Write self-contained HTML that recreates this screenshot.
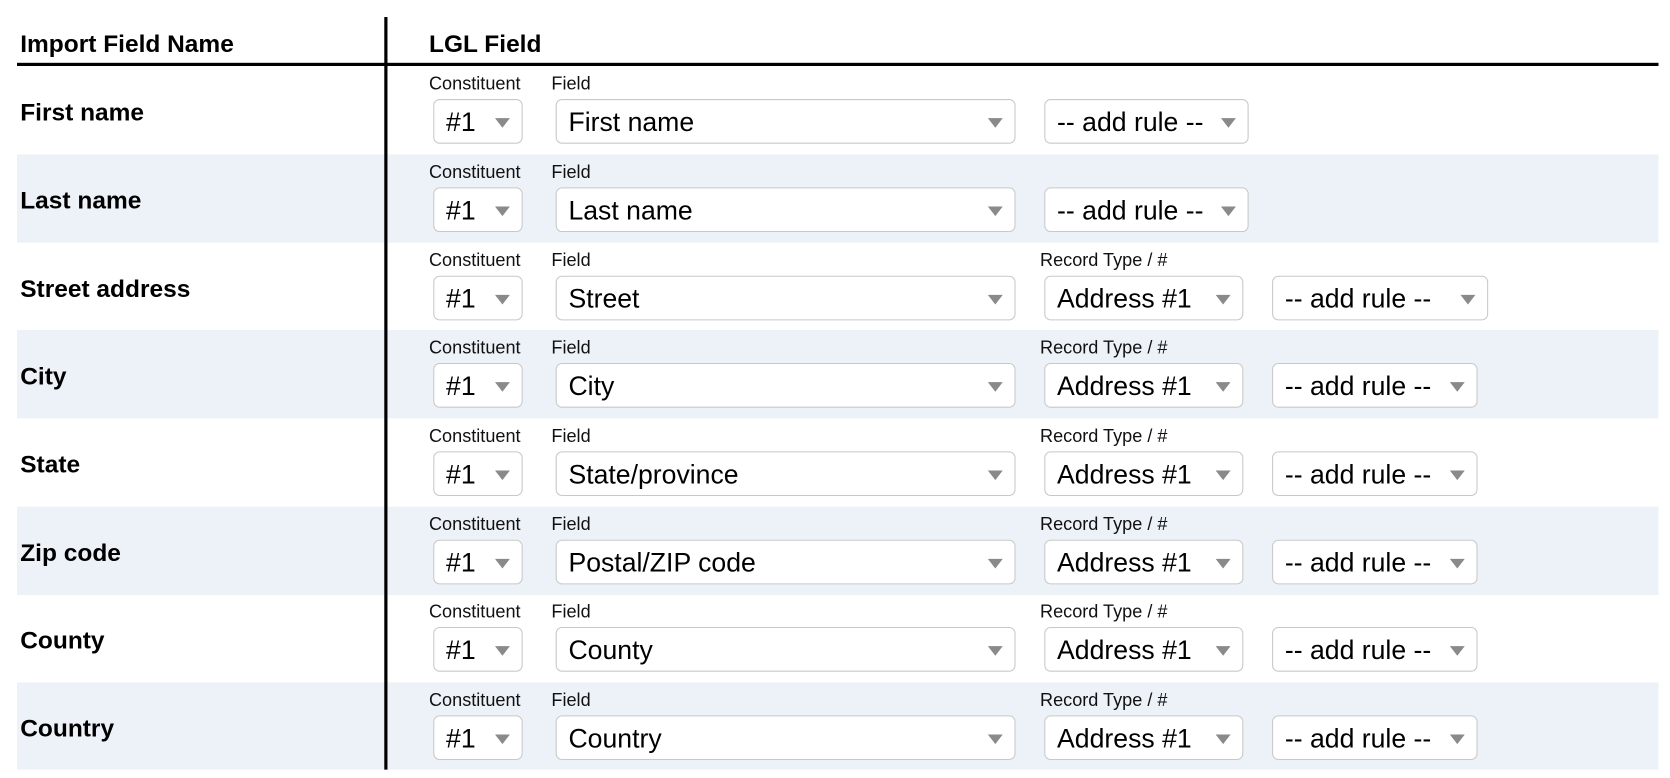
<!DOCTYPE html>
<html><head><style>
body{margin:0;width:1670px;height:778px;background:#fff;font-family:"Liberation Sans",Arial,sans-serif;position:relative;overflow:hidden}
#w{position:absolute;left:0;top:0;width:1570px;height:731px;transform:scale(1.0645);transform-origin:0 0}
.a{position:absolute}
.h{font-weight:bold;font-size:23px;top:28px}
.row{position:absolute;left:16px;width:1542px;height:83px}
.sh{background:#edf2f8}
.t{position:absolute;left:3px;top:30px;font-weight:bold;font-size:23px}
.l{position:absolute;top:7px;font-size:17px;color:#111}
.s{position:absolute;top:31px;height:42px;border:1px solid #c8c8c8;border-radius:6px;background:#fff;box-sizing:border-box;font-size:25px;line-height:42px;padding-left:11px;white-space:nowrap;overflow:hidden}
.s:after{content:"";position:absolute;right:11px;top:17px;border-left:7px solid transparent;border-right:7px solid transparent;border-top:9px solid #8a8a8a}
</style></head><body><div id="w">
<div class="a h" style="left:19px">Import Field Name</div>
<div class="a h" style="left:403px">LGL Field</div>
<div class="a" style="left:16px;top:59px;width:1542px;height:3px;background:#000"></div>
<div class="row" style="top:62px"><div class="t">First name</div><div class="l" style="left:387px">Constituent</div><div class="l" style="left:502px">Field</div><div class="s" style="left:391px;width:84px">#1</div><div class="s" style="left:506px;width:432px">First name</div><div class="s" style="left:965px;width:192px">-- add rule --</div></div>
<div class="row sh" style="top:145px"><div class="t">Last name</div><div class="l" style="left:387px">Constituent</div><div class="l" style="left:502px">Field</div><div class="s" style="left:391px;width:84px">#1</div><div class="s" style="left:506px;width:432px">Last name</div><div class="s" style="left:965px;width:192px">-- add rule --</div></div>
<div class="row" style="top:228px"><div class="t">Street address</div><div class="l" style="left:387px">Constituent</div><div class="l" style="left:502px">Field</div><div class="l" style="left:961px">Record Type / #</div><div class="s" style="left:391px;width:84px">#1</div><div class="s" style="left:506px;width:432px">Street</div><div class="s" style="left:965px;width:187px">Address #1</div><div class="s" style="left:1179px;width:203px">-- add rule --</div></div>
<div class="row sh" style="top:310px"><div class="t">City</div><div class="l" style="left:387px">Constituent</div><div class="l" style="left:502px">Field</div><div class="l" style="left:961px">Record Type / #</div><div class="s" style="left:391px;width:84px">#1</div><div class="s" style="left:506px;width:432px">City</div><div class="s" style="left:965px;width:187px">Address #1</div><div class="s" style="left:1179px;width:193px">-- add rule --</div></div>
<div class="row" style="top:393px"><div class="t">State</div><div class="l" style="left:387px">Constituent</div><div class="l" style="left:502px">Field</div><div class="l" style="left:961px">Record Type / #</div><div class="s" style="left:391px;width:84px">#1</div><div class="s" style="left:506px;width:432px">State/province</div><div class="s" style="left:965px;width:187px">Address #1</div><div class="s" style="left:1179px;width:193px">-- add rule --</div></div>
<div class="row sh" style="top:476px"><div class="t">Zip code</div><div class="l" style="left:387px">Constituent</div><div class="l" style="left:502px">Field</div><div class="l" style="left:961px">Record Type / #</div><div class="s" style="left:391px;width:84px">#1</div><div class="s" style="left:506px;width:432px">Postal/ZIP code</div><div class="s" style="left:965px;width:187px">Address #1</div><div class="s" style="left:1179px;width:193px">-- add rule --</div></div>
<div class="row" style="top:558px"><div class="t">County</div><div class="l" style="left:387px">Constituent</div><div class="l" style="left:502px">Field</div><div class="l" style="left:961px">Record Type / #</div><div class="s" style="left:391px;width:84px">#1</div><div class="s" style="left:506px;width:432px">County</div><div class="s" style="left:965px;width:187px">Address #1</div><div class="s" style="left:1179px;width:193px">-- add rule --</div></div>
<div class="row sh" style="top:641px;height:82px"><div class="t">Country</div><div class="l" style="left:387px">Constituent</div><div class="l" style="left:502px">Field</div><div class="l" style="left:961px">Record Type / #</div><div class="s" style="left:391px;width:84px">#1</div><div class="s" style="left:506px;width:432px">Country</div><div class="s" style="left:965px;width:187px">Address #1</div><div class="s" style="left:1179px;width:193px">-- add rule --</div></div>
<div class="a" style="left:361px;top:16px;width:3px;height:707px;background:#000"></div>
</div></body></html>
